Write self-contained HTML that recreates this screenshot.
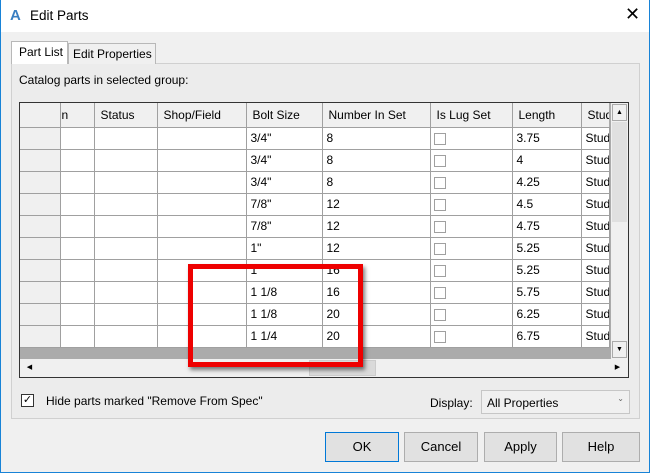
<!DOCTYPE html>
<html><head><style>
*{box-sizing:border-box;margin:0;padding:0}
body{width:650px;height:473px;background:#f0f0f0;font-family:"Liberation Sans",sans-serif;font-size:12px;color:#000;position:relative;overflow:hidden}
.abs{position:absolute}
.win{position:absolute;left:0;top:0;width:650px;height:473px;border:1px solid #1883d7;border-top:none}
.title{left:1px;top:0;width:648px;height:32px;background:#fff}
table{border-collapse:collapse;table-layout:fixed}
td{border:1px solid #a0a0a0;height:22px;padding:0 0 0 4px;white-space:nowrap;overflow:hidden;background:#fff}
th{border:1px solid #a0a0a0;border-top:none;height:24px;font-weight:normal;text-align:left;padding-left:6px;background:#f0f0f0;white-space:nowrap;overflow:hidden}
td.rh{background:#f0f0f0;border-left:none}
.cb{display:inline-block;width:12px;height:12px;border:1px solid #a0a0a0;background:#fff;vertical-align:middle;margin-left:-1px}
.btn{position:absolute;top:432px;height:30px;border:1px solid #adadad;background:#e1e1e1;text-align:center;line-height:28px;font-size:13px}
.arr{font-size:7px;color:#000;text-align:center}
</style></head><body>
<div class="win"></div>
<div class="abs title"></div>
<div class="abs" style="left:10px;top:7px;font-weight:bold;font-size:15px;color:#3a7fc2">A</div>
<div class="abs" style="left:30px;top:8px;font-size:13.5px">Edit Parts</div>
<div class="abs" style="left:625px;top:4px;font-size:18px">✕</div>
<div class="abs" style="left:11px;top:63px;width:629px;height:356px;border:1px solid #d0d0d0;background:#ececec"></div>
<div class="abs" style="left:68px;top:43px;width:88px;height:21px;border:1px solid #b8b8b8;border-bottom:none;background:#f0f0f0;padding:3px 0 0 4px">Edit Properties</div>
<div class="abs" style="left:11px;top:41px;width:57px;height:23px;border:1px solid #b8b8b8;border-bottom:none;background:#fff;padding:3px 0 0 7px">Part List</div>
<div class="abs" style="left:19px;top:73px">Catalog parts in selected group:</div>
<div class="abs" style="left:19px;top:102px;width:610px;height:276px;border:1px solid #333;background:#ababab;overflow:hidden">
<table style="width:589px">
<colgroup><col style="width:40px"><col style="width:34px"><col style="width:63px"><col style="width:89px"><col style="width:76px"><col style="width:108px"><col style="width:82px"><col style="width:69px"><col style="width:28px"></colgroup>
<tr><th style="border-left:none"></th><th style="padding-left:1px">n</th><th>Status</th><th>Shop/Field</th><th>Bolt Size</th><th>Number In Set</th><th>Is Lug Set</th><th>Length</th><th style="border-right:none">Stud</th></tr>
<tr><td class="rh"></td><td></td><td></td><td></td><td>3/4"</td><td>8</td><td><span class="cb"></span></td><td>3.75</td><td>Stud</td></tr>
<tr><td class="rh"></td><td></td><td></td><td></td><td>3/4"</td><td>8</td><td><span class="cb"></span></td><td>4</td><td>Stud</td></tr>
<tr><td class="rh"></td><td></td><td></td><td></td><td>3/4"</td><td>8</td><td><span class="cb"></span></td><td>4.25</td><td>Stud</td></tr>
<tr><td class="rh"></td><td></td><td></td><td></td><td>7/8"</td><td>12</td><td><span class="cb"></span></td><td>4.5</td><td>Stud</td></tr>
<tr><td class="rh"></td><td></td><td></td><td></td><td>7/8"</td><td>12</td><td><span class="cb"></span></td><td>4.75</td><td>Stud</td></tr>
<tr><td class="rh"></td><td></td><td></td><td></td><td>1"</td><td>12</td><td><span class="cb"></span></td><td>5.25</td><td>Stud</td></tr>
<tr><td class="rh"></td><td></td><td></td><td></td><td>1"</td><td>16</td><td><span class="cb"></span></td><td>5.25</td><td>Stud</td></tr>
<tr><td class="rh"></td><td></td><td></td><td></td><td>1 1/8</td><td>16</td><td><span class="cb"></span></td><td>5.75</td><td>Stud</td></tr>
<tr><td class="rh"></td><td></td><td></td><td></td><td>1 1/8</td><td>20</td><td><span class="cb"></span></td><td>6.25</td><td>Stud</td></tr>
<tr><td class="rh"></td><td></td><td></td><td></td><td>1 1/4</td><td>20</td><td><span class="cb"></span></td><td>6.75</td><td>Stud</td></tr>
</table>
<div class="abs" style="left:591px;top:0;width:17px;height:256px;background:#f0f0f0"></div>
<div class="abs arr" style="left:592px;top:1px;width:15px;height:17px;border:1px solid #aaa;background:#f0f0f0;line-height:15px">▲</div>
<div class="abs" style="left:592px;top:19px;width:15px;height:100px;background:#e0e0e0"></div>
<div class="abs arr" style="left:592px;top:238px;width:15px;height:17px;border:1px solid #aaa;background:#f0f0f0;line-height:15px">▼</div>
<div class="abs" style="left:0;top:256px;width:608px;height:18px;background:#f0f0f0"></div>
<div class="abs arr" style="left:2px;top:257px;width:15px;height:16px;line-height:16px">◀</div>
<div class="abs" style="left:289px;top:257px;width:67px;height:16px;background:#dadada;border:1px solid #ccc"></div>
<div class="abs arr" style="left:590px;top:257px;width:15px;height:16px;line-height:16px">▶</div>
</div>
<div class="abs" style="left:188px;top:264px;width:175px;height:103px;border:5px solid #ee0000;box-shadow:2px 3px 4px rgba(0,0,0,.5)"></div>
<div class="abs" style="left:21px;top:394px;width:13px;height:13px;border:1px solid #333;background:#fff;font-size:11px;line-height:11px;text-align:center">✓</div>
<div class="abs" style="left:46px;top:394px">Hide parts marked "Remove From Spec"</div>
<div class="abs" style="left:430px;top:396px">Display:</div>
<div class="abs" style="left:481px;top:390px;width:149px;height:24px;border:1px solid #c6c6c6;background:#f0f0f0;padding:5px 0 0 5px">All Properties<span style="position:absolute;right:5px;top:3px;font-size:8px;color:#666">⌄</span></div>
<div class="btn" style="left:325px;width:74px;border:1px solid #0078d7">OK</div>
<div class="btn" style="left:404px;width:74px">Cancel</div>
<div class="btn" style="left:484px;width:73px">Apply</div>
<div class="btn" style="left:562px;width:78px">Help</div>
</body></html>
